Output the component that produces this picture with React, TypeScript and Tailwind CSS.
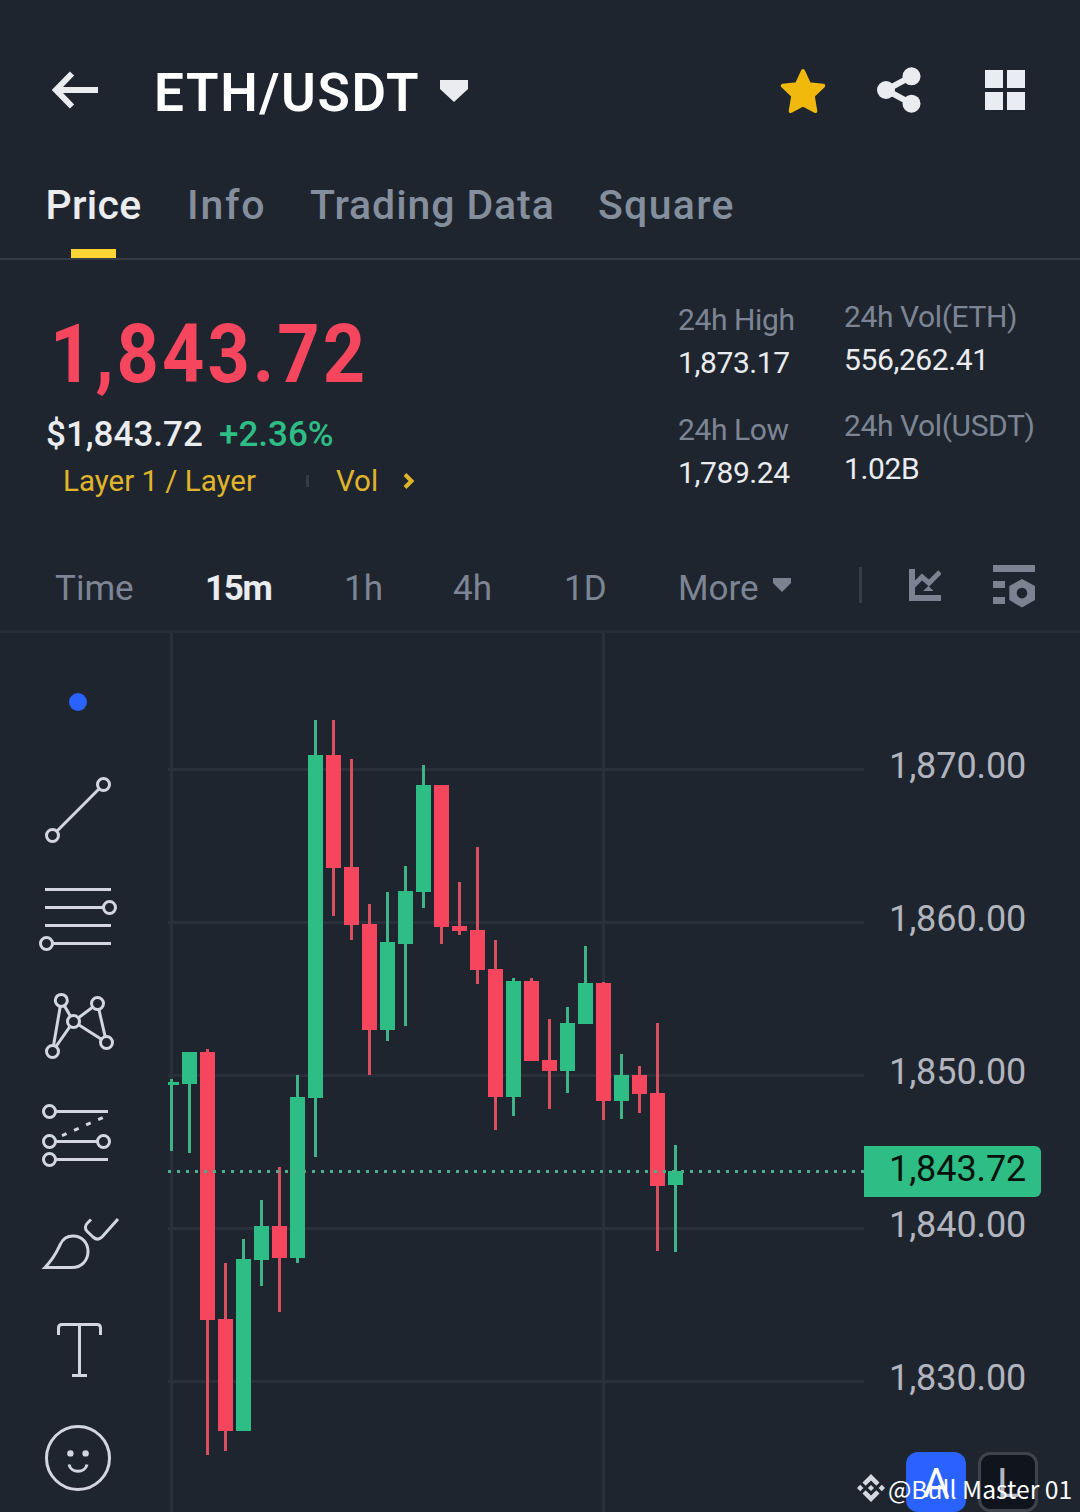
import React from "react";

type Candle = {
  high: number;
  top: number;
  bottom: number;
  low: number;
  up: boolean;
};

const UP = "#2ebd85";
const DOWN = "#f6465d";

// y positions of wick and body, one entry every 18px
const candles: Candle[] = [
  { high: 1079, top: 1082, bottom: 1085, low: 1151, up: true },
  { high: 1052, top: 1052, bottom: 1084, low: 1153, up: true },
  { high: 1049, top: 1052, bottom: 1320, low: 1455, up: false },
  { high: 1263, top: 1319, bottom: 1431, low: 1451, up: false },
  { high: 1239, top: 1259, bottom: 1431, low: 1431, up: true },
  { high: 1200, top: 1226, bottom: 1260, low: 1286, up: true },
  { high: 1167, top: 1226, bottom: 1258, low: 1312, up: false },
  { high: 1075, top: 1097, bottom: 1258, low: 1263, up: true },
  { high: 720, top: 755, bottom: 1098, low: 1157, up: true },
  { high: 720, top: 755, bottom: 868, low: 916, up: false },
  { high: 759, top: 867, bottom: 925, low: 940, up: false },
  { high: 904, top: 924, bottom: 1030, low: 1075, up: false },
  { high: 892, top: 942, bottom: 1030, low: 1041, up: true },
  { high: 866, top: 891, bottom: 944, low: 1026, up: true },
  { high: 765, top: 785, bottom: 892, low: 908, up: true },
  { high: 785, top: 785, bottom: 927, low: 944, up: false },
  { high: 882, top: 926, bottom: 931, low: 935, up: false },
  { high: 847, top: 930, bottom: 970, low: 984, up: false },
  { high: 940, top: 969, bottom: 1097, low: 1130, up: false },
  { high: 978, top: 981, bottom: 1097, low: 1116, up: true },
  { high: 978, top: 981, bottom: 1061, low: 1061, up: false },
  { high: 1019, top: 1060, bottom: 1071, low: 1109, up: false },
  { high: 1007, top: 1023, bottom: 1071, low: 1093, up: true },
  { high: 946, top: 983, bottom: 1024, low: 1024, up: true },
  { high: 982, top: 983, bottom: 1101, low: 1120, up: false },
  { high: 1054, top: 1075, bottom: 1101, low: 1119, up: true },
  { high: 1066, top: 1075, bottom: 1094, low: 1113, up: false },
  { high: 1023, top: 1093, bottom: 1186, low: 1251, up: false },
  { high: 1145, top: 1171, bottom: 1185, low: 1252, up: true },
];

const gridY = [769.5, 922.5, 1075.5, 1228.5, 1381.5];
const gridX = [171.5, 603.5];
const priceLabels = ["1,870.00", "1,860.00", "1,850.00", "1,840.00", "1,830.00"];

function Header() {
  return (
    <header className="h-[180px] flex items-center pl-[52px] pr-[55px]">
      <svg width="46" height="38" viewBox="0 0 46 38" fill="none">
        <path d="M46 19H5M20 2.5L4 19L20 35.5" stroke="#eaecef" strokeWidth="6" />
      </svg>
      <h1 className="ml-[56px] mt-[5px] text-[53px] leading-[64px] font-semibold tracking-[1.6px] text-white">
        ETH/USDT
      </h1>
      <svg className="ml-5 mt-0.5" width="28" height="22" viewBox="0 0 28 22">
        <path d="M0 0H28V9L14 22L0 9Z" fill="#eaecef" />
      </svg>
      <div className="ml-auto flex items-center">
        <svg className="mt-px" width="46" height="46" viewBox="0 0 46 46">
          <path
            d="M23 3L29 16.2L43.2 17.8L32.7 27.7L35.3 43L23 36.6L10.7 43L13.3 27.7L2.8 17.8L17 16.2Z"
            fill="#f0b90b"
            stroke="#f0b90b"
            strokeWidth="4"
            strokeLinejoin="round"
          />
        </svg>
        <svg className="ml-[51px]" width="44" height="46" viewBox="0 0 44 46">
          <path d="M34.5 9.3L9 23L34.5 36.7" stroke="#eaecef" strokeWidth="6" fill="none" />
          <circle cx="9" cy="23" r="9" fill="#eaecef" />
          <circle cx="34.5" cy="9.3" r="9" fill="#eaecef" />
          <circle cx="34.5" cy="36.7" r="9" fill="#eaecef" />
        </svg>
        <div className="ml-16 grid grid-cols-2 gap-1">
          <span className="w-[18px] h-[18px] bg-[#eaecf3]" />
          <span className="w-[18px] h-[18px] bg-[#eaecf3]" />
          <span className="w-[18px] h-[18px] bg-[#eaecf3]" />
          <span className="w-[18px] h-[18px] bg-[#eaecf3]" />
        </div>
      </div>
    </header>
  );
}

function Tabs() {
  return (
    <nav className="h-20 border-b-2 border-[#333b47] flex text-[41px] leading-[50px] font-medium tracking-[0.9px] text-[#848e9c]">
      <div className="ml-[46px] w-[95px] flex flex-col items-center text-[#eaecef]">
        <span className="whitespace-nowrap tracking-[0.3px]">Price</span>
        <span className="mt-[19px] w-[45px] h-[9px] bg-[#fcd535]" />
      </div>
      <span className="ml-[46px] w-[123px] tracking-[1.8px]">Info</span>
      <span className="w-[288px] whitespace-nowrap">Trading Data</span>
      <span className="tracking-[1.3px]">Square</span>
    </nav>
  );
}

function Stat({ label, value }: { label: string; value: string }) {
  return (
    <div className="text-[30px] leading-[43px] whitespace-nowrap">
      <p className="tracking-[-0.4px] text-[#7d8594]">{label}</p>
      <p className="tracking-[-0.4px] text-[#eaecef]">{value}</p>
    </div>
  );
}

function Summary() {
  return (
    <section className="h-[280px] flex">
      <div className="w-[678px] pt-[52px] pl-[46px]">
        <p className="ml-1 origin-left scale-x-[0.9] text-[82px] leading-[84px] font-bold tracking-[3.4px] text-[#f6465d]">
          1,843.72
        </p>
        <div className="mt-[15px] flex text-[35px] leading-[48px] font-medium">
          <span className="w-[173px] text-[#eaecef]">$1,843.72</span>
          <span className="text-[#2ebd85]">+2.36%</span>
        </div>
        <div className="mt-0.5 pl-[17px] flex items-center text-[29.5px] leading-[40px] text-[#e0b52c]">
          <span className="w-[243px] whitespace-nowrap">Layer 1 / Layer</span>
          <span className="w-[3px] h-3 bg-[#343a45]" />
          <span className="ml-[27px] w-[67px]">Vol</span>
          <svg width="12" height="16" viewBox="0 0 12 16" fill="none">
            <path d="M2 1.5L8.5 8L2 14.5" stroke="#e0b52c" strokeWidth="4" />
          </svg>
        </div>
      </div>
      <div className="w-[166px] pt-[38px] flex flex-col gap-6">
        <Stat label="24h High" value="1,873.17" />
        <Stat label="24h Low" value="1,789.24" />
      </div>
      <div className="pt-[35px] flex flex-col gap-[23px]">
        <Stat label="24h Vol(ETH)" value="556,262.41" />
        <Stat label="24h Vol(USDT)" value="1.02B" />
      </div>
    </section>
  );
}

function Intervals() {
  return (
    <div className="h-[93px] pt-[25px] border-b-[3px] border-[#262c37] flex text-[35px] leading-[48px] text-[#7d8594]">
      <span className="ml-[55px] w-[150px]">Time</span>
      <span className="w-[139px] font-bold tracking-[-1.3px] text-[#eaecef]">15m</span>
      <span className="w-[109px]">1h</span>
      <span className="w-[111px]">4h</span>
      <span className="w-[114px]">1D</span>
      <span className="w-[95px]">More</span>
      <svg className="mt-[13px]" width="18" height="14" viewBox="0 0 18 14">
        <path d="M0 0H18V5L9 14L0 5Z" fill="#7b8292" />
      </svg>
      <span className="ml-[68px] mt-0.5 w-[3px] h-9 bg-[#363c47]" />
      <svg className="ml-[47px] mt-1" width="32" height="32" viewBox="0 0 32 32">
        <path d="M0 0H6V26H32V32H0Z" fill="#7b8292" />
        <path d="M4 17L13 8L20 14L31 3" fill="none" stroke="#7b8292" strokeWidth="5" />
        <path d="M14.5 11.5H24.5L19.5 17L24.5 22H14L19.5 17Z" fill="#7b8292" />
      </svg>
      <svg className="ml-[52px]" width="42" height="43" viewBox="0 0 42 43" fill="#7b8292">
        <path d="M0 0H42V7H0ZM0 16H12V23H0ZM0 32H12V39H0Z" />
        <path
          fillRule="evenodd"
          d="M29 14L42 21V35L29 42.5L16.3 35V21ZM29 22.8A5.3 5.3 0 1 0 29 33.4A5.3 5.3 0 1 0 29 22.8Z"
        />
      </svg>
    </div>
  );
}

function Tool({ children }: { children: React.ReactNode }) {
  return (
    <button className="h-[108px] pl-9 flex items-center">
      <svg width="84" height="84" viewBox="0 0 84 84" fill="none" stroke="#d3d6e0" strokeWidth="3">
        {children}
      </svg>
    </button>
  );
}

function DrawingTools() {
  return (
    <aside className="w-[168px] pt-[15px] flex flex-col">
      <Tool>
        <circle cx="42" cy="42" r="9" fill="#2962ff" stroke="none" />
      </Tool>
      {/* trend line */}
      <Tool>
        <path d="M20.8 63.2L63.2 20.8" />
        <circle cx="16.5" cy="67.5" r="6" />
        <circle cx="67.5" cy="16.5" r="6" />
      </Tool>
      {/* fib levels */}
      <Tool>
        <path d="M9 13.5H75M9 31.5H67M9 49.5H75M17 67.5H75" />
        <circle cx="73.5" cy="31.5" r="6" />
        <circle cx="10.5" cy="67.5" r="6" />
      </Tool>
      {/* pattern */}
      <Tool>
        <path d="M25.3 16.4L16.5 67.5L37.5 37.5L61.5 19.5L70.5 58.5L37.5 37.5Z" />
        <g fill="#1f252f">
          <circle cx="25.3" cy="16.4" r="6" />
          <circle cx="61.5" cy="19.5" r="6" />
          <circle cx="37.5" cy="37.5" r="6" />
          <circle cx="70.5" cy="58.5" r="6" />
          <circle cx="16.5" cy="67.5" r="6" />
        </g>
      </Tool>
      {/* forecast */}
      <Tool>
        <path d="M20 19.5H72M20 49.5H61M20 67.5H72" />
        <path d="M26 43.7L68 25" strokeDasharray="5 8.2" />
        <circle cx="13.5" cy="19.5" r="6" />
        <circle cx="13.5" cy="49.5" r="6" />
        <circle cx="67.5" cy="49.5" r="6" />
        <circle cx="13.5" cy="67.5" r="6" />
      </Tool>
      {/* brush */}
      <Tool>
        <path d="M9 67.5C19 57 21.5 50 24.5 44C27 38.5 31.5 36 37 36C46 36 52 43 52 51.5C52 61 45 67.5 36 67.5Z" />
        <path d="M55 19.5L51.5 23C48.8 25.5 48.8 29 51 31.3L57 37C60 39.6 63.5 39.6 66.2 36.8L82 19" />
      </Tool>
      {/* text */}
      <Tool>
        <path d="M22.5 27V20Q22.5 16.5 26 16.5H61Q64.5 16.5 64.5 20V27M43.5 16.5V67.5M36 67.5H51" />
      </Tool>
      {/* emoji */}
      <Tool>
        <circle cx="42" cy="42" r="31.5" />
        <circle cx="34.4" cy="37.4" r="3.2" fill="#d3d6e0" stroke="none" />
        <circle cx="49.6" cy="37.4" r="3.2" fill="#d3d6e0" stroke="none" />
        <path d="M33 48.5C35 57.5 49 57.5 51 48.5" />
      </Tool>
    </aside>
  );
}

function CandleChart() {
  return (
    <svg className="shrink-0" width="696" height="879" viewBox="168 633 696 879">
      <g stroke="#2a303a" strokeWidth="3">
        {gridX.map((x) => (
          <line key={x} x1={x} x2={x} y1="633" y2="1512" />
        ))}
        {gridY.map((y) => (
          <line key={y} x1="168" x2="864" y1={y} y2={y} />
        ))}
      </g>
      {candles.map((c, i) => {
        const x = 171.5 + i * 18;
        return (
          <g key={i}>
            <rect
              x={x - 1.5}
              y={c.high}
              width="3"
              height={c.low - c.high}
              fill={c.up ? "#3fb488" : "#d8505f"}
            />
            <rect
              x={x - 7.5}
              y={c.top}
              width="15"
              height={c.bottom - c.top}
              fill={c.up ? UP : DOWN}
            />
          </g>
        );
      })}
      <line x1="168" x2="864" y1="1171.5" y2="1171.5" stroke="#4bb08a" strokeWidth="3" strokeDasharray="3 6" />
    </svg>
  );
}

function PriceAxis() {
  return (
    <div className="relative flex-1 pt-[57px] pl-[25px] text-[36px] tracking-[-0.1px] text-[#b2b5be]">
      {priceLabels.map((p) => (
        <div key={p} className="h-[153px] leading-[153px]">
          {p}
        </div>
      ))}
      <div className="absolute left-0 top-[513px] w-[177px] h-[51px] pl-[25px] leading-[46px] rounded-r-md bg-[#2ebd85] text-[#06120d]">
        1,843.72
      </div>
      <div className="absolute left-[42px] top-[819px] flex gap-3 text-[41px] leading-[62px] text-center">
        <div className="w-[60px] h-[60px] rounded-xl bg-[#2962ff] text-white">A</div>
        <div className="w-[60px] h-[60px] rounded-xl border-[3px] border-[#3f434c] bg-[#0f141d] leading-[56px] text-[#b2b5be]">
          L
        </div>
      </div>
    </div>
  );
}

function Watermark() {
  return (
    <div className="absolute left-[857px] top-[1470px] flex items-center whitespace-nowrap text-white">
      <svg width="28" height="28" viewBox="0 0 28 28" fill="#d5d8e0">
        <path d="M14 0L22.5 8.5L19.3 11.7L14 6.4L8.7 11.7L5.5 8.5ZM14 28L22.5 19.5L19.3 16.3L14 21.6L8.7 16.3L5.5 19.5Z" />
        <path d="M14 10.9L17.1 14L14 17.1L10.9 14ZM3.2 10.8L6.4 14L3.2 17.2L0 14ZM24.8 10.8L28 14L24.8 17.2L21.6 14Z" />
      </svg>
      <span className="ml-[3px] text-[24.7px] leading-[36px] font-normal font-['Noto_Sans_CJK_SC',sans-serif]">
        @Bull Master 01
      </span>
    </div>
  );
}

export default function App() {
  return (
    <div className="relative w-[1080px] h-[1512px] overflow-hidden bg-[#1f252f] font-['Roboto',sans-serif]">
      <Header />
      <Tabs />
      <Summary />
      <Intervals />
      <main className="flex h-[879px]">
        <DrawingTools />
        <CandleChart />
        <PriceAxis />
      </main>
      <Watermark />
    </div>
  );
}
